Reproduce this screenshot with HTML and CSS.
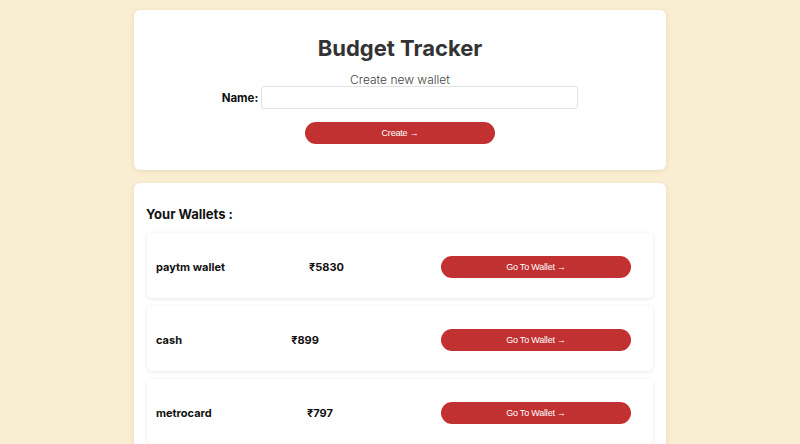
FILE: index.html
```html
<!DOCTYPE html>
<html lang="en">
<head>
    <meta charset="UTF-8">
    <meta name="viewport" content="width=device-width, initial-scale=1.0">
    <title>Budget Tracker</title>
    <link rel="stylesheet" href="styles.css">
</head>
<body>
    <div id="app">
        <section class="card card-create">
            <h1>Budget Tracker</h1>
            <p class="subtitle">Create new wallet</p>
            <div class="name-row">
                <label for="wallet-name">Name:</label>
                <input type="text" id="wallet-name">
            </div>
            <button class="btn btn-create">Create &rarr;</button>
        </section>

        <section class="card card-list">
            <h2>Your Wallets :</h2>
            <div class="wallet">
                <div class="wallet-info">
                    <span class="wallet-name">paytm wallet</span>
                    <span class="wallet-amount">&#8377;5830</span>
                </div>
                <button class="btn btn-go">Go To Wallet &rarr;</button>
            </div>
            <div class="wallet">
                <div class="wallet-info">
                    <span class="wallet-name">cash</span>
                    <span class="wallet-amount">&#8377;899</span>
                </div>
                <button class="btn btn-go">Go To Wallet &rarr;</button>
            </div>
            <div class="wallet">
                <div class="wallet-info">
                    <span class="wallet-name">metrocard</span>
                    <span class="wallet-amount">&#8377;797</span>
                </div>
                <button class="btn btn-go">Go To Wallet &rarr;</button>
            </div>
        </section>
    </div>
</body>
</html>
```

FILE: styles.css
```css
*{
    margin: 0;
    box-sizing: border-box;
}
:root{
    --fundo:#f9edd2;
    --vermelho:#c13131;
    --texto:#333333;
}
html, body{
    background-color: var(--fundo);
    font-family: Inter, "Noto Sans", sans-serif;
    color: var(--texto);
}
#app{
    width: 532px;
    margin: 0 auto;
    padding-top: 10px;
    display: flex;
    flex-direction: column;
    gap: 13px;
}
.card{
    background-color: white;
    border-radius: 6px;
    box-shadow: 0 1px 4px rgba(150, 120, 60, 0.15);
}
.card-create{
    padding: 24px 12px 26px;
    display: flex;
    flex-direction: column;
    align-items: center;
}
h1{
    font-size: 22px;
    line-height: 28px;
    font-weight: 700;
    color: #333;
}
.subtitle{
    margin-top: 11px;
    font-size: 12px;
    line-height: 13px;
    font-weight: 300;
    color: #444;
}
.name-row{
    display: flex;
    align-items: center;
    gap: 3px;
}
.name-row label{
    font-size: 11.5px;
    font-weight: 700;
    color: #111;
}
.name-row input{
    width: 317px;
    height: 23px;
    border: 1px solid #e2e2e2;
    border-radius: 3px;
}
.btn{
    background-color: var(--vermelho);
    color: white;
    border: none;
    border-radius: 12px;
    font: normal 9px "Liberation Sans", Arial, sans-serif;
    letter-spacing: -0.2px;
    width: 190px;
    height: 22px;
}
.btn-create{
    margin-top: 13px;
}
.card-list{
    padding: 20px 12px 12px;
    display: flex;
    flex-direction: column;
    gap: 8px;
}
h2{
    font-size: 13px;
    line-height: 22px;
    font-weight: 700;
    color: #111;
}
.wallet{
    display: flex;
    align-items: center;
    height: 65px;
    margin: 0 1px;
    padding: 2px 22px 0 9px;
    border-radius: 5px;
    box-shadow: 0 1px 4px rgba(0, 0, 0, 0.1);
}
.wallet-info{
    flex: 1;
    display: flex;
    font-size: 11px;
    font-weight: 700;
    color: #111;
}
.wallet-amount{
    margin: 0 auto;
}
.btn-go{
    margin-left: 13px;
}
```
